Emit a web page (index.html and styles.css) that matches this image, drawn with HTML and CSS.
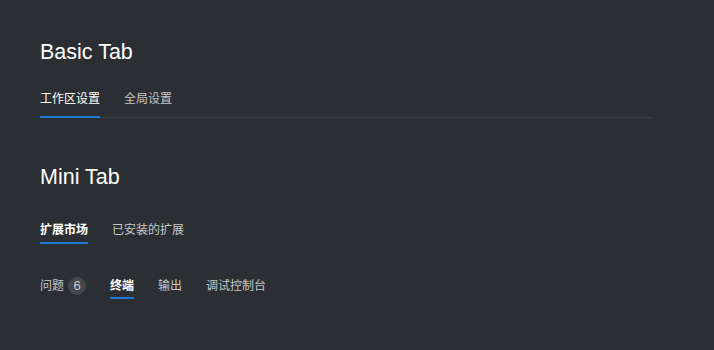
FILE: index.html
```html
<!DOCTYPE html>
<html lang="zh-CN">

<head>
    <meta charset="UTF-8">
    <meta name="viewport" content="width=device-width, initial-scale=1.0">
    <title>Tab</title>
    <link rel="stylesheet" href="styles.css">
</head>

<body>

    <div class="page">
        <h2 class="title">Basic Tab</h2>
        <div class="tabs tabs-basic">
            <div class="tab active">工作区设置</div>
            <div class="tab">全局设置</div>
        </div>

        <h2 class="title title-mini">Mini Tab</h2>
        <div class="tabs tabs-mini">
            <div class="tab active">扩展市场</div>
            <div class="tab">已安装的扩展</div>
        </div>

        <!-- 带徽标的 mini tab -->
        <div class="tabs tabs-mini tabs-panel">
            <div class="tab">问题<span class="badge">6</span></div>
            <div class="tab active">终端</div>
            <div class="tab">输出</div>
            <div class="tab">调试控制台</div>
        </div>
    </div>

</body>

</html>
```

FILE: styles.css
```css
body {
    margin: 0;
    padding: 0;
    background-color: #2b2f33;
    color: #c6c7c9;
    font-family: "Liberation Sans", "Noto Sans CJK SC", sans-serif;
}

.page {
    padding: 38px 62px 0 40px;
    height: 312px;
}

.title {
    margin: 0;
    font-size: 21.5px;
    line-height: 28px;
    font-weight: normal;
    color: #ffffff;
}

.title-mini {
    margin-top: 45px;
}

.tabs {
    display: flex;
    gap: 24px;
}

.tab {
    display: flex;
    align-items: center;
    font-size: 12px;
    line-height: 20px;
    border-bottom: 2px solid transparent;
}

.tab.active {
    color: #ffffff;
    border-bottom-color: #1f7ad8;
}

.tabs-basic {
    margin-top: 23px;
    border-bottom: 1px solid #3a3d41;
}

.tabs-basic .tab {
    padding-bottom: 7px;
    margin-bottom: -1px;
}

.tabs-mini {
    margin-top: 29px;
}

.tabs-mini .tab {
    padding-bottom: 2px;
}

.tabs-mini .tab.active {
    font-weight: bold;
}

.tabs-panel {
    margin-top: 32px;
}

.tabs-panel .tab {
    padding-bottom: 1px;
}

.badge {
    display: inline-flex;
    align-items: center;
    justify-content: center;
    width: 18px;
    height: 18px;
    margin-left: 4px;
    border-radius: 50%;
    background-color: #44474b;
    color: #c6c7c9;
    font-size: 13px;
}
```
